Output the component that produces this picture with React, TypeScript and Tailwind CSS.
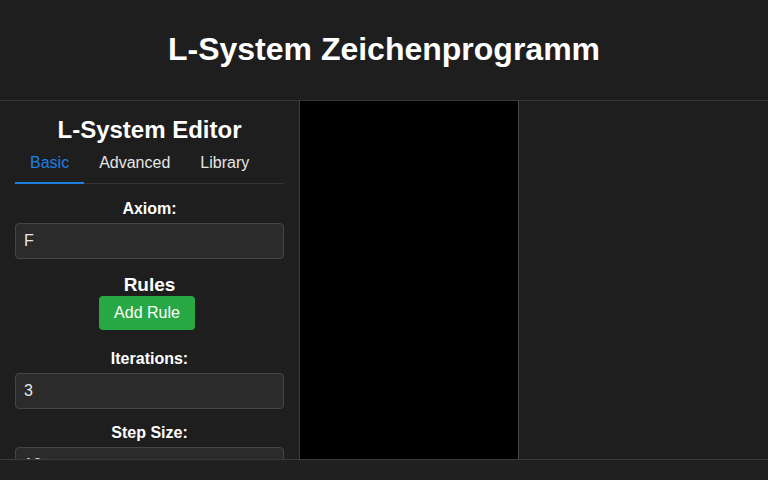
import { useState } from 'react';

const tabs = ['Basic', 'Advanced', 'Library'];

function Field({ label, value, className = '' }: { label: string; value: string; className?: string }) {
  return (
    <div className={className}>
      <label className="block text-center font-bold text-[16px] leading-[18px] mb-[5px]">{label}</label>
      <input
        defaultValue={value}
        className="block w-full h-[36px] px-[8px] rounded-[4px] bg-[#2b2b2b] border border-[#454545] text-[16px] text-[#e8e8e8] outline-none"
      />
    </div>
  );
}

export default function App() {
  const [active, setActive] = useState('Basic');

  return (
    <div
      className="h-screen flex flex-col bg-[#1e1e1e] text-white overflow-hidden"
      style={{ fontFamily: '"Liberation Sans", Arial, sans-serif' }}
    >
      <header className="h-[101px] shrink-0 flex items-center justify-center border-b border-[#353535]">
        <h1 className="text-[32px] font-bold leading-none -mt-[3px]">L-System Zeichenprogramm</h1>
      </header>

      <main className="flex h-[358px] shrink-0 overflow-hidden">
        <aside className="w-[300px] shrink-0 border-r border-[#3a3a3a] px-[15px] pt-[15px] overflow-hidden">
          <h2 className="text-center text-[24px] font-bold leading-[28px]">L-System Editor</h2>
          <div className="flex border-b border-[#353535]">
            {tabs.map(t => (
              <button
                key={t}
                onClick={() => setActive(t)}
                className={
                  t === active
                    ? 'px-[15px] pt-[10px] pb-[10px] text-[16px] leading-[18px] text-[#1f7fe0] border-b-2 border-[#1f7fe0] -mb-px'
                    : 'px-[15px] pt-[10px] pb-[10px] text-[16px] leading-[18px] text-[#e6e6e6] border-b-2 border-transparent -mb-px'
                }
              >
                {t}
              </button>
            ))}
          </div>

          <Field label="Axiom:" value="F" className="mt-[16px]" />

          <div className="mt-[15px] flex flex-col items-center">
            <h3 className="text-[19px] font-bold leading-[22px]">Rules</h3>
            <button className="h-[34px] px-[15px] mr-[5px] rounded-[4px] bg-[#28a745] text-[16px] text-white">Add Rule</button>
          </div>

          <Field label="Iterations:" value="3" className="mt-[20px]" />
          <Field label="Step Size:" value="10" className="mt-[15px]" />
        </aside>

        <div className="w-[219px] shrink-0 bg-black border-r border-[#4a4a4a]" />
        <div className="flex-1" />
      </main>

      <footer className="flex-1 border-t border-[#3a3a3a] bg-[#202020]" />
    </div>
  );
}
